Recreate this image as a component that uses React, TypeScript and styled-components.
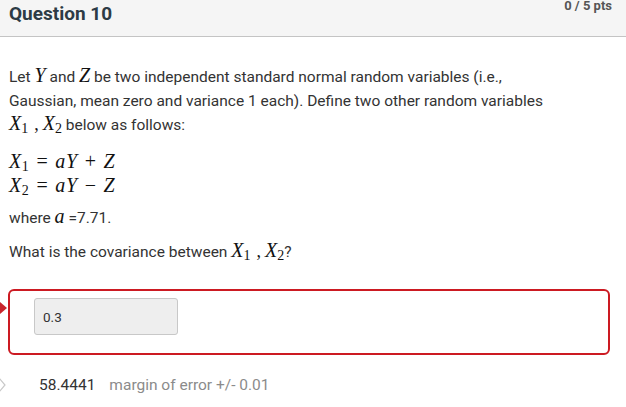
import styled, { createGlobalStyle } from "styled-components";

const GlobalStyle = createGlobalStyle`
    body {
        margin: 0;
        background: #fff;
        font-family: Roboto, "Liberation Sans", sans-serif;
        color: #2d3b45;
    }
`;

const Page = styled.div`
    width: 626px;
    height: 407px;
    overflow: hidden;
`;

const Header = styled.header`
    height: 36px;
    display: flex;
    justify-content: space-between;
    align-items: flex-start;
    padding: 0 14px 0 9px;
    background: #f5f5f5;
    border-bottom: 1px solid #c4c4c4;
`;

const Title = styled.h2`
    margin: 3px 0 0;
    font-size: 19px;
    font-weight: 700;
    line-height: 22px;
    color: #2d3b45;
`;

const Points = styled.span`
    margin-top: -2px;
    font-size: 13px;
    font-weight: 700;
    color: #555;
`;

const Body = styled.div`
    padding: 28px 8px 0 9px;
    max-width: 540px;
`;

const Para = styled.p<{ $gap?: number }>`
    margin: 0 0 ${(p) => p.$gap ?? 10}px;
    font-size: 15.5px;
    line-height: 24px;
    color: #333;
`;

const M = styled.span<{ $size?: number }>`
    font-family: "Liberation Serif", "Times New Roman", serif;
    font-style: italic;
    font-size: ${(p) => p.$size ?? 20}px;
    line-height: 1;
    color: #111;
`;

const Comma = styled.span`
    font-family: "Liberation Serif", "Times New Roman", serif;
    font-size: 18px;
    line-height: 1;
    color: #111;
    margin: 0 4px 0 6px;
`;

const Sub = styled.sub`
    font-style: normal;
    font-size: 14px;
    line-height: 1;
    vertical-align: -3px;
`;

const Op = styled.span`
    font-style: normal;
    padding: 0 7px;
`;

const Eq = styled.div`
    font-family: "Liberation Serif", "Times New Roman", serif;
    font-style: italic;
    font-size: 20px;
    line-height: 23px;
    letter-spacing: 0.6px;
    color: #111;
    margin: 13px 0 8px;
`;

const AnswerRow = styled.div`
    position: relative;
    margin: 25px 16px 0 8px;
`;

const Marker = styled.span`
    position: absolute;
    left: -8px;
    top: 13px;
    width: 0;
    height: 0;
    border-top: 6px solid transparent;
    border-bottom: 6px solid transparent;
    border-left: 7px solid #c9252c;
`;

const AnswerBox = styled.div`
    height: 66px;
    box-sizing: border-box;
    border: 2px solid #cc1a22;
    border-radius: 6px;
    padding: 7px 24px;
    display: flex;
    align-items: flex-start;
`;

const Input = styled.div`
    width: 144px;
    height: 37px;
    box-sizing: border-box;
    padding: 0 4px 0 8px;
    background: #eeeeee;
    border: 1px solid #c8c8c8;
    border-radius: 3px;
    display: flex;
    align-items: center;
    font-size: 13.5px;
    color: #333;
`;

const CorrectRow = styled.div`
    position: relative;
    display: flex;
    align-items: baseline;
    gap: 14px;
    margin-top: 18px;
    padding-left: 39px;
    font-size: 15.5px;
    line-height: 24px;
`;

const Chevron = styled.svg`
    position: absolute;
    left: -1px;
    top: 5px;
`;

const Value = styled.span`
    color: #333;
`;

const Margin = styled.span`
    color: #8b8b8b;
`;

const XPair = () => (
    <>
        <M>
            X<Sub>1</Sub>
        </M>
        <Comma>,</Comma>
        <M>
            X<Sub>2</Sub>
        </M>
    </>
);

export default function App() {
    return (
        <Page>
            <GlobalStyle />
            <Header>
                <Title>Question 10</Title>
                <Points>0 / 5 pts</Points>
            </Header>
            <Body>
                <Para $gap={0}>
                    Let <M>Y</M> and <M>Z</M> be two independent standard normal random variables (i.e.,
                    Gaussian, mean zero and variance 1 each). Define two other random variables <XPair />{" "}
                    below as follows:
                </Para>
                <Eq>
                    <div>
                        X<Sub>1</Sub>
                        <Op>=</Op>aY<Op>+</Op>Z
                    </div>
                    <div>
                        X<Sub>2</Sub>
                        <Op>=</Op>aY<Op>−</Op>Z
                    </div>
                </Eq>
                <Para>
                    where <M>a</M> =7.71.
                </Para>
                <Para $gap={0}>
                    What is the covariance between <XPair />?
                </Para>
            </Body>
            <AnswerRow>
                <Marker />
                <AnswerBox>
                    <Input>0.3</Input>
                </AnswerBox>
            </AnswerRow>
            <CorrectRow>
                <Chevron width="7" height="14" viewBox="0 0 7 14">
                    <path d="M0.5 0.5 L6 7 L0.5 13.5" fill="none" stroke="#c8c8c8" strokeWidth="1.2" />
                </Chevron>
                <Value>58.4441</Value>
                <Margin>margin of error +/- 0.01</Margin>
            </CorrectRow>
        </Page>
    );
}
